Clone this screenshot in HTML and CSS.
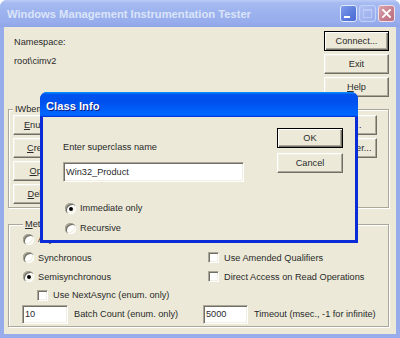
FILE: index.html
```html
<!DOCTYPE html>
<html>
<head>
<meta charset="utf-8">
<link rel="stylesheet" href="styles.css">
</head>
<body>
<div class="window">
  <div class="titlebar">
    <span class="title">Windows Management Instrumentation Tester</span>
    <div class="caption-btns">
      <div class="cbtn cmin"><svg width="15" height="15" viewBox="0 0 15 15"><rect x="3" y="10" width="6" height="2" fill="#fff"/></svg></div>
      <div class="cbtn cmax"><svg width="15" height="15" viewBox="0 0 15 15"><rect x="3.5" y="3.5" width="8" height="8" fill="none" stroke="#bccaf4" stroke-width="1"/><rect x="3" y="3" width="9" height="2" fill="#bccaf4"/></svg></div>
      <div class="cbtn cclose"><svg width="15" height="15" viewBox="0 0 15 15"><path d="M4 4 L11 11 M11 4 L4 11" stroke="#fff" stroke-width="1.8" stroke-linecap="square"/></svg></div>
    </div>
  </div>
  <div class="client">
    <div class="top">
      <div class="ns">
        <div class="line">Namespace:</div>
        <div class="line ns-val">root\cimv2</div>
      </div>
      <div class="side-btns">
        <div class="btn default">Connect...</div>
        <div class="btn">Exit</div>
        <div class="btn"><u>H</u>elp</div>
      </div>
    </div>
    <fieldset class="group wbem">
      <legend>IWbemServices</legend>
      <div class="wbem-grid">
        <div class="btn"><u>E</u>num Classes...</div>
        <div class="btn">Enum Instances...</div>
        <div class="btn">Open Namespace...</div>
        <div class="btn">Edit Context...</div>
        <div class="btn"><u>C</u>reate Class...</div>
        <div class="btn">Create Instance...</div>
        <div class="btn">Query...</div>
        <div class="btn">Create Refresher...</div>
        <div class="btn"><u>O</u>pen Class...</div>
        <div class="btn">Open Instance...</div>
        <div class="btn">Notification Query...</div>
        <div class="empty"></div>
        <div class="btn"><u>D</u>elete Class...</div>
        <div class="btn">Delete Instance...</div>
        <div class="btn">Execute Method...</div>
        <div class="empty"></div>
      </div>
    </fieldset>
    <fieldset class="group methods">
      <legend><u>M</u>ethod Invocation Options</legend>
      <div class="opt-grid">
        <div class="radio"><i></i>Asynchronous</div>
        <div></div>
        <div class="radio"><i></i>Synchronous</div>
        <div class="check"><i></i>Use Amended Qualifiers</div>
        <div class="radio checked"><i></i>Semisynchronous</div>
        <div class="check"><i></i>Direct Access on Read Operations</div>
        <div class="check indent"><i></i>Use NextAsync (enum. only)</div>
        <div></div>
      </div>
      <div class="num-row">
        <div class="num left"><div class="edit small">10</div><span>Batch Count (enum. only)</span></div>
        <div class="num right"><div class="edit small">5000</div><span>Timeout (msec., -1 for infinite)</span></div>
      </div>
    </fieldset>
  </div>

  <div class="dialog">
    <div class="dtitle">Class Info</div>
    <div class="dclient">
      <div class="dleft">
        <div class="line">Enter superclass name</div>
        <div class="edit wide">Win32_Product</div>
        <div class="radios">
          <div class="radio checked"><i></i>Immediate only</div>
          <div class="radio"><i></i>Recursive</div>
        </div>
      </div>
      <div class="dright">
        <div class="btn default">OK</div>
        <div class="btn">Cancel</div>
      </div>
    </div>
  </div>
</div>
</body>
</html>
```

FILE: styles.css
```css
* { box-sizing: border-box; }
html, body { margin: 0; padding: 0; }
body {
  width: 400px;
  height: 338px;
  overflow: hidden;
  background: #ffffff;
  font-family: "Liberation Sans", Arial, sans-serif;
  font-size: 9.2px;
  color: #2a2a2a;
}
u { text-decoration: underline; text-underline-offset: 1px; }

.window {
  position: relative;
  width: 400px;
  height: 338px;
  display: flex;
  flex-direction: column;
  border-radius: 7px 7px 0 0;
  overflow: hidden;
  background: #97adeb;
}

.titlebar {
  height: 27px;
  flex: none;
  display: flex;
  align-items: center;
  padding: 0 5px 0 7px;
  background: linear-gradient(to bottom, #bccbf6 0%, #a5baf1 12%, #9db3ef 45%, #97adec 80%, #8fa5e7 100%);
}
.title {
  flex: 1;
  font-weight: bold;
  font-size: 11.2px;
  color: #dbe5f9;
}
.caption-btns { display: flex; gap: 2px; }
.cbtn {
  width: 17px;
  height: 17px;
  border-radius: 3px;
  border: 1px solid #e2e9fb;
  display: flex;
  align-items: center;
  justify-content: center;
}
.cmin { background: linear-gradient(135deg, #7f9bea 0%, #5a7adc 60%, #4c6cd4 100%); }
.cmax { background: linear-gradient(135deg, #aebff2 0%, #99aeee 100%); border-color: #c4d2f6; }
.cclose { background: linear-gradient(135deg, #d9a3ad 0%, #c57d8c 60%, #b86f80 100%); border-color: #f3e0e4; }

.client {
  flex: 1;
  margin: 0 4px 4px;
  background: #ece9d8;
  display: flex;
  flex-direction: column;
  padding: 4px 7px 0 4px;
}

.line { height: 12px; line-height: 12px; white-space: nowrap; }

.top { display: flex; justify-content: space-between; }
.ns { padding: 5px 0 0 6px; }
.ns-val { margin-top: 7px; }
.side-btns { display: flex; flex-direction: column; gap: 3px; width: 65px; }

.btn {
  height: 20px;
  display: flex;
  align-items: center;
  justify-content: center;
  white-space: nowrap;
  overflow: hidden;
  background: #ece9d8;
  border: 1px solid;
  border-color: #ffffff #716f64 #716f64 #ffffff;
  box-shadow: inset -1px -1px 0 #aca899, inset 1px 1px 0 #f1efe2;
}
.btn.default {
  border: 1px solid #000;
  box-shadow: inset 1px 1px 0 #ffffff, inset -1px -1px 0 #716f64, inset -2px -2px 0 #aca899;
}

.group {
  margin: 0;
  min-width: 0;
  border: 1px solid #aca899;
  box-shadow: inset 1px 1px 0 #ffffff, 1px 1px 0 #ffffff;
}
.group legend {
  padding: 0 2px;
  margin-left: 0;
  height: 12px;
  line-height: 12px;
  background: #ece9d8;
}
.wbem {
  margin-top: 6px;
  padding: 0 11px 3px 4px;
}
.wbem-grid {
  display: grid;
  grid-template-columns: repeat(4, 1fr);
  grid-auto-rows: 20px;
  gap: 3px;
}

.methods {
  margin-top: 10px;
  padding: 0 11px 2px 14px;
}
.opt-grid {
  display: grid;
  grid-template-columns: 185px 1fr;
  grid-auto-rows: 18.67px;
  align-items: center;
}
.radio, .check { display: flex; align-items: center; white-space: nowrap; height: 12px; }
.radio i {
  width: 11px;
  height: 11px;
  flex: none;
  border-radius: 50%;
  background: #fff;
  margin-right: 4px;
  position: relative;
  box-shadow: inset 1px 1px 0 #aca899, inset 2px 2px 0 #716f64, inset -1px -1px 0 #ffffff, inset -2px -2px 0 #f1efe2;
}
.radio.checked i::after {
  content: "";
  position: absolute;
  left: 4px;
  top: 4px;
  width: 4px;
  height: 4px;
  border-radius: 50%;
  background: #000;
}
.check i {
  width: 11px;
  height: 11px;
  flex: none;
  background: #fff;
  margin-right: 5px;
  border: 1px solid;
  border-color: #aca899 #fff #fff #aca899;
  box-shadow: inset 1px 1px 0 #716f64, inset -1px -1px 0 #f1efe2;
}
.check.indent { margin-left: 14px; }

.num-row {
  display: grid;
  grid-template-columns: 185px 1fr;
}
.num { display: flex; align-items: center; white-space: nowrap; }
.num.left { margin-left: -1px; }
.num.right { margin-left: -5px; }
.num span { margin-left: 6px; }

.edit {
  height: 19px;
  background: #fff;
  display: flex;
  align-items: center;
  padding-left: 2px;
  border: 1px solid;
  border-color: #aca899 #ffffff #ffffff #aca899;
  box-shadow: inset 1px 1px 0 #716f64, inset -1px -1px 0 #f1efe2;
  white-space: nowrap;
}
.edit.small { width: 46px; }
.num.right .edit.small { width: 45px; }
.edit.wide { width: 181px; margin-top: 9px; height: 20px; }

.dialog {
  position: absolute;
  left: 40px;
  top: 92px;
  width: 318px;
  height: 151px;
  display: flex;
  flex-direction: column;
  border-radius: 7px 7px 0 0;
  background: #0a2bd6;
  padding: 0 3px 3px;
}
.dtitle {
  height: 25px;
  flex: none;
  margin: 0 -3px;
  padding: 2px 0 0 6px;
  display: flex;
  align-items: center;
  border-radius: 7px 7px 0 0;
  color: #fff;
  font-weight: bold;
  font-size: 11.2px;
  text-shadow: 1px 1px 0 #0a1883;
  background: linear-gradient(to bottom, #0997ff 0%, #0053ee 10%, #0050ee 40%, #0063fb 80%, #0066ff 90%, #005bff 94%, #003dd7 97%, #003dd7 100%);
}
.dclient {
  flex: 1;
  background: #ece9d8;
  display: flex;
  padding: 11px 0 0 20px;
}
.dleft { width: 181px; padding-top: 13px; }
.radios { margin-top: 20px; padding-left: 2px; display: flex; flex-direction: column; gap: 8px; }
.dright { margin-left: 33px; width: 66px; display: flex; flex-direction: column; gap: 5px; }
```
